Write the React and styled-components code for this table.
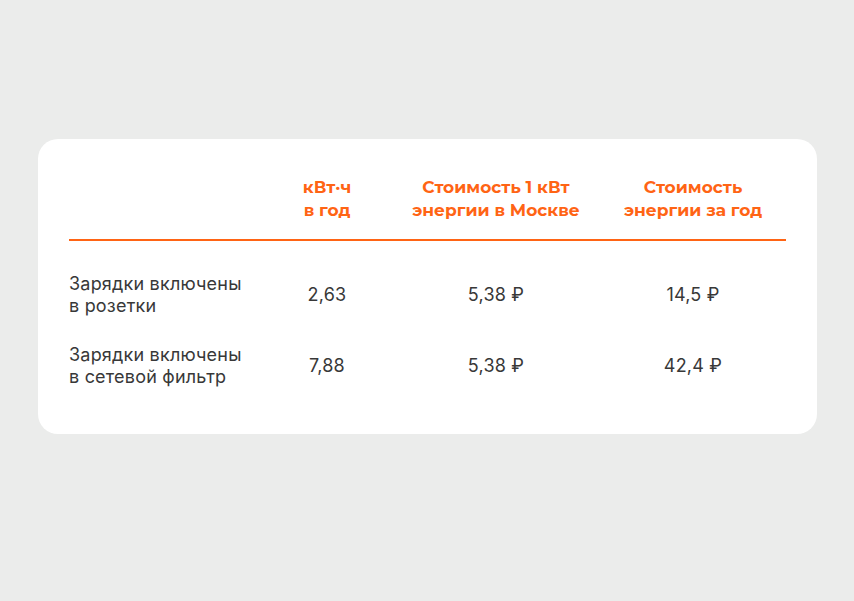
import React from "react";
import styled, { createGlobalStyle } from "styled-components";

const Global = createGlobalStyle`
  html, body {
    margin: 0;
    padding: 0;
    background: #ebeceb;
  }
  body {
    font-family: Inter, "Noto Sans", sans-serif;
  }
`;

const Page = styled.div`
  width: 854px;
  height: 601px;
  padding: 139px 37px 0 38px;
  box-sizing: border-box;
`;

const Card = styled.div`
  background: #fff;
  border-radius: 20px;
  padding: 37px 31px 46px;
  width: 779px;
  box-sizing: border-box;
`;

const Row = styled.div`
  display: grid;
  grid-template-columns: 193px 130px 208px 186px;
  align-items: center;
  & + & {
    margin-top: 27px;
  }
`;

const Divider = styled.div`
  height: 1.5px;
  background-color: #ff6414;
  margin: 17px 0 32px;
`;

const HeadCell = styled.div`
  font-family: Montserrat, "Open Sans", sans-serif;
  font-weight: 700;
  font-size: 17px;
  line-height: 23px;
  color: #ff6414;
  text-align: center;
`;

const Label = styled.div`
  font-size: 18px;
  line-height: 22px;
  letter-spacing: 0.2px;
  color: #383838;
`;

const Value = styled.div`
  font-size: 18px;
  line-height: 22px;
  letter-spacing: 0.2px;
  color: #383838;
  text-align: center;
`;

const rows = [
  { label: ["Зарядки включены", "в розетки"], kwh: "2,63", price: "5,38 ₽", year: "14,5 ₽" },
  { label: ["Зарядки включены", "в сетевой фильтр"], kwh: "7,88", price: "5,38 ₽", year: "42,4 ₽" },
];

export default function App() {
  return (
    <Page>
      <Global />
      <Card>
        <Row>
          <div />
          <HeadCell>кВт·ч<br />в год</HeadCell>
          <HeadCell>Стоимость 1 кВт<br />энергии в Москве</HeadCell>
          <HeadCell>Стоимость<br />энергии за год</HeadCell>
        </Row>
        <Divider />
        {rows.map((r, i) => (
          <Row key={i}>
            <Label>{r.label[0]}<br />{r.label[1]}</Label>
            <Value>{r.kwh}</Value>
            <Value>{r.price}</Value>
            <Value>{r.year}</Value>
          </Row>
        ))}
      </Card>
    </Page>
  );
}
